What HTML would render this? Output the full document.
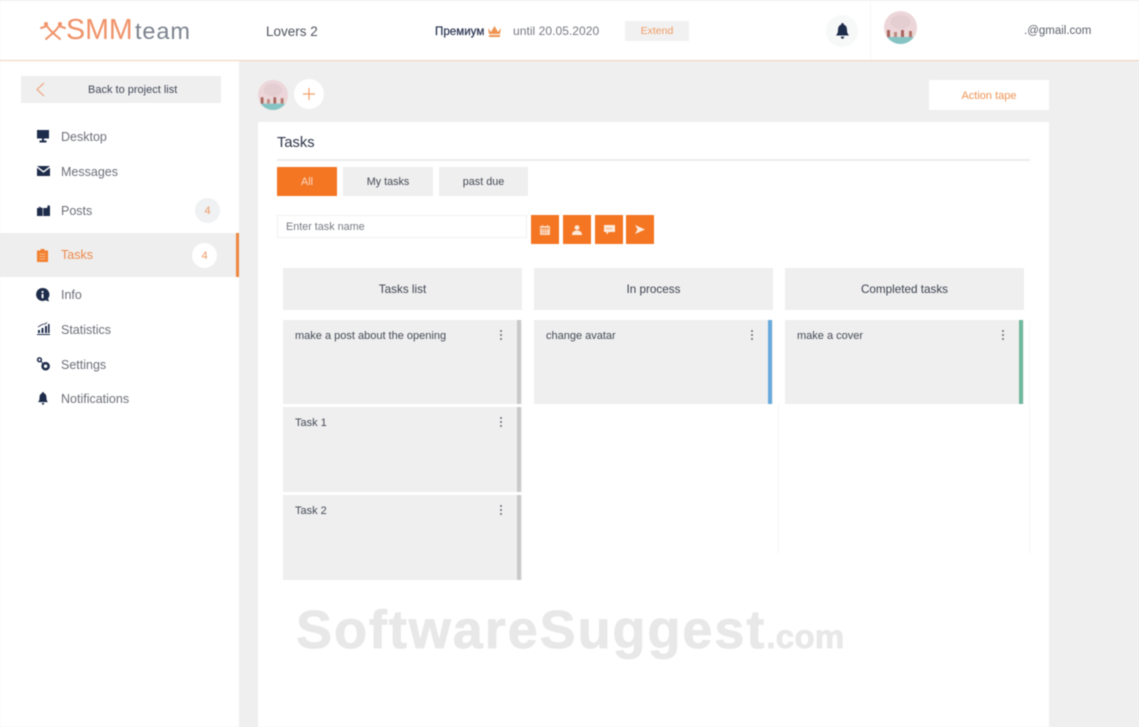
<!DOCTYPE html>
<html lang="en">
<head>
<meta charset="utf-8">
<title>SMMteam Tasks</title>
<style>
html,body{margin:0;padding:0;width:1139px;height:727px;overflow:hidden;background:#efefef;font-family:"Liberation Sans",sans-serif;color:#4a4f5c}
.a{position:absolute;box-sizing:border-box;white-space:nowrap}
.c{display:flex;align-items:center;justify-content:center}
#root{position:relative;width:1139px;height:727px;overflow:hidden;filter:blur(.4px)}
.nav{left:61px;font-size:12.5px;line-height:16px;color:#6d7079}
.ic{position:absolute;overflow:visible}
.head{top:268px;width:239px;height:42px;background:#efefef;font-size:11.7px;color:#3d4250;padding-top:1px}
.card{width:239px;background:#efefef;font-size:11px;color:#444955}
.card span{position:absolute;left:12px;top:9.5px;line-height:13px}
.bar{position:absolute;right:1px;top:0;bottom:0;width:4px}
.dots{position:absolute;width:2px;height:2px;background:#666a73;border-radius:50%;box-shadow:0 -4px 0 #666a73,0 4px 0 #666a73}
.btn{top:215px;width:28px;height:29px;background:#f47623}
.tab{top:167px;height:29px;font-size:10.8px;background:#efefef;color:#444955}
</style>
</head>
<body>
<div id="root">
<!-- sidebar -->
<div class="a" style="left:0;top:0;width:239px;height:727px;background:#fff"></div>
<!-- header -->
<div class="a" style="left:0;top:0;width:1139px;height:61px;background:#fff;border-bottom:1px solid #f0d2bb;border-top:1px solid #f2f2f2"></div>
<div class="a" style="left:870px;top:1px;width:1px;height:59px;background:#f6f6f6"></div>

<!-- logo -->
<svg class="ic" style="left:40px;top:21px" width="26" height="19" viewBox="0 0 26 19" fill="none" stroke="#f0936a" stroke-width="2" stroke-linecap="round">
<path d="M1 7 L7 5 L10 9 L13 12 M13 12 L6 18 M13 12 L20 18 M25 7 L19 5 L16 9 L13 12"/>
<circle cx="6" cy="3" r="2" fill="#f0936a" stroke="none"/><circle cx="20" cy="3" r="2" fill="#f0936a" stroke="none"/>
</svg>
<div class="a" style="left:66px;top:15px;font-size:28.6px;line-height:30px;color:#f0936a">SMM</div>
<div class="a" style="left:135px;top:18px;font-size:23.5px;line-height:27px;color:#7c838e;letter-spacing:.9px">team</div>

<div class="a" style="left:266px;top:24px;font-size:13.5px;line-height:16px;color:#50545f">Lovers 2</div>
<div class="a" style="left:435px;top:25px;font-size:11.6px;line-height:13px;color:#26304f;-webkit-text-stroke:.2px #26304f;font-family:'Liberation Sans','Noto Sans CJK SC',sans-serif">Премиум</div>
<svg class="ic" style="left:488px;top:26px" width="13" height="11" viewBox="0 0 13 11"><path d="M0 2 L3 6 L6.5 0 L10 6 L13 2 L12 8 H1 Z M1 9 H12 V11 H1 Z" fill="#ee9450"/></svg>
<div class="a" style="left:513px;top:24px;font-size:12px;line-height:14px;color:#777a82;letter-spacing:.05px">until 20.05.2020</div>
<div class="a c" style="left:625px;top:21px;width:64px;height:20px;background:#f1f1f1;color:#ee9a62;font-size:10.5px">Extend</div>

<div class="a" style="left:826px;top:15px;width:32px;height:32px;border-radius:50%;background:#f7f8f8"></div>
<svg class="ic" style="left:836px;top:23px" width="13" height="16" viewBox="0 0 13 16"><path d="M6.5 0 C7.5 0 7.8 .8 7.8 1.6 C10.2 2.4 11 4.4 11 7 C11 9.5 11.6 10.8 13 12.5 H0 C1.4 10.8 2 9.5 2 7 C2 4.4 2.8 2.4 5.2 1.6 C5.2 .8 5.5 0 6.5 0 Z M4.8 13.6 H8.2 C8.1 15 7.4 15.7 6.5 15.7 C5.6 15.7 4.9 15 4.8 13.6 Z" fill="#1e2c4b"/></svg>

<!-- header avatar -->
<svg class="ic" style="left:884px;top:11px" width="33" height="33" viewBox="0 0 33 33">
<defs><clipPath id="h"><circle cx="16.5" cy="16.5" r="16.5"/></clipPath></defs>
<g clip-path="url(#h)"><rect width="33" height="33" fill="#ecd6da"/><ellipse cx="16.5" cy="11" rx="10" ry="7" fill="#e4ced2"/><rect y="21" width="33" height="4" fill="#e9d8d2"/><rect x="3" y="19" width="3" height="7" fill="#a9645f"/><rect x="10" y="21" width="3" height="5" fill="#c08a84"/><rect x="17" y="19" width="3" height="7" fill="#a9645f"/><rect x="25" y="20" width="3" height="6" fill="#b5736c"/><rect y="26" width="33" height="7" fill="#86c4c4"/></g>
</svg>
<div class="a" style="left:1024px;top:24px;font-size:11.5px;line-height:14px;color:#5d616b">.@gmail.com</div>

<!-- back -->
<div class="a" style="left:21px;top:76px;width:200px;height:27px;background:#efefef"></div>
<svg class="ic" style="left:35px;top:82px" width="10" height="15" viewBox="0 0 10 15" fill="none" stroke="#eeaa85" stroke-width="1.2"><path d="M9 1 L2 7.5 L9 14"/></svg>
<div class="a" style="left:88px;top:83px;font-size:11px;line-height:14px;color:#434858">Back to project list</div>

<!-- active -->
<div class="a" style="left:0;top:233px;width:239px;height:44px;background:#eeeeee"></div>
<div class="a" style="left:236px;top:233px;width:3px;height:44px;background:#ee8540"></div>

<!-- nav icons -->
<svg class="ic" style="left:37px;top:130px" width="12" height="13" viewBox="0 0 12 13"><path d="M0 0 H12 V8.5 H0 Z M5 8.5 H7 V10.5 H5 Z M2.5 10.5 H9.5 V12.5 H2.5 Z" fill="#1e2c4b"/></svg>
<svg class="ic" style="left:37px;top:166px" width="13" height="10" viewBox="0 0 13 10"><path d="M0 0 H13 L6.5 5 Z M0 1.8 L6.5 6.8 L13 1.8 V10 H0 Z" fill="#1e2c4b"/></svg>
<svg class="ic" style="left:37px;top:205px" width="13" height="11" viewBox="0 0 13 11"><path d="M0 3 H2 V1.5 L5 3 L10 3 L11 0 L13 1 V11 H0 Z" fill="#1e2c4b"/><path d="M6 3 V11" stroke="#fff" stroke-width=".6"/></svg>
<svg class="ic" style="left:37px;top:249px" width="11" height="13" viewBox="0 0 11 13"><path d="M0 1.5 H3.5 V0 H7.5 V1.5 H11 V13 H0 Z" fill="#f2802f"/><path d="M2.5 5 H8.5 M2.5 7.5 H8.5 M2.5 10 H8.5" stroke="#f9c9a4" stroke-width=".8"/></svg>
<svg class="ic" style="left:36px;top:288px" width="14" height="14" viewBox="0 0 14 14"><path d="M6.5 0 A6.5 6.5 0 1 0 9.5 12.3 L13 13.5 L12 10.5 A6.5 6.5 0 0 0 6.5 0 Z" fill="#1e2c4b"/><rect x="5.6" y="6" width="1.9" height="4.2" fill="#fff"/><rect x="5.6" y="3" width="1.9" height="1.9" fill="#fff"/></svg>
<svg class="ic" style="left:37px;top:322px" width="13" height="13" viewBox="0 0 13 13"><path d="M1 8 H3 V11 H1 Z M4.5 6 H6.5 V11 H4.5 Z M8 4 H10 V11 H8 Z M11 2 H12.6 V11 H11 Z M0 12 H13 V13 H0 Z" fill="#1e2c4b"/><path d="M1 5 L5 2.5 L8 2 L10 0.5" stroke="#1e2c4b" stroke-width=".8" fill="none"/></svg>
<svg class="ic" style="left:37px;top:357px" width="13" height="14" viewBox="0 0 13 14"><circle cx="2.5" cy="2.8" r="1.9" fill="none" stroke="#1e2c4b" stroke-width="1.5"/><circle cx="8.6" cy="9.2" r="3" fill="none" stroke="#1e2c4b" stroke-width="2.6"/><path d="M4 4.5 L6 6.5" stroke="#1e2c4b" stroke-width="1"/></svg>
<svg class="ic" style="left:38px;top:392px" width="10" height="13" viewBox="0 0 13 16" preserveAspectRatio="none"><path d="M6.5 0 C7.5 0 7.8 .8 7.8 1.6 C10.2 2.4 11 4.4 11 7 C11 9.5 11.6 10.8 13 12.5 H0 C1.4 10.8 2 9.5 2 7 C2 4.4 2.8 2.4 5.2 1.6 C5.2 .8 5.5 0 6.5 0 Z M4.8 13.6 H8.2 C8.1 15 7.4 15.7 6.5 15.7 C5.6 15.7 4.9 15 4.8 13.6 Z" fill="#1e2c4b"/></svg>

<!-- nav labels -->
<div class="a nav" style="top:128.5px">Desktop</div>
<div class="a nav" style="top:163.5px">Messages</div>
<div class="a nav" style="top:203px">Posts</div>
<div class="a nav" style="top:247px;color:#ee8a4c">Tasks</div>
<div class="a nav" style="top:286.5px">Info</div>
<div class="a nav" style="top:321.5px">Statistics</div>
<div class="a nav" style="top:356.5px">Settings</div>
<div class="a nav" style="top:391px">Notifications</div>

<div class="a c" style="left:195px;top:198px;width:25px;height:25px;border-radius:50%;background:#eff1f2;color:#ee9a62;font-size:11px">4</div>
<div class="a c" style="left:192px;top:243px;width:25px;height:25px;border-radius:50%;background:#fff;color:#ee9a62;font-size:11px">4</div>

<!-- top row content -->
<svg class="ic" style="left:258px;top:80px" width="30" height="30" viewBox="0 0 33 33">
<defs><clipPath id="h2"><circle cx="16.5" cy="16.5" r="16.5"/></clipPath></defs>
<g clip-path="url(#h2)"><rect width="33" height="33" fill="#ecd6da"/><ellipse cx="16.5" cy="11" rx="10" ry="7" fill="#e4ced2"/><rect y="21" width="33" height="4" fill="#e9d8d2"/><rect x="3" y="19" width="3" height="7" fill="#a9645f"/><rect x="10" y="21" width="3" height="5" fill="#c08a84"/><rect x="17" y="19" width="3" height="7" fill="#a9645f"/><rect x="25" y="20" width="3" height="6" fill="#b5736c"/><rect y="26" width="33" height="7" fill="#86c4c4"/></g>
</svg>
<div class="a" style="left:294px;top:79px;width:30px;height:30px;border-radius:50%;background:#fff"></div>
<svg class="ic" style="left:302px;top:87px" width="14" height="14" viewBox="0 0 14 14"><path d="M7 1 V13 M1 7 H13" stroke="#f1a06a" stroke-width="1.2"/></svg>
<div class="a c" style="left:929px;top:80px;width:120px;height:30px;background:#fff;color:#ee9455;font-size:11px;padding-top:1px">Action tape</div>

<!-- panel -->
<div class="a" style="left:258px;top:122px;width:791px;height:605px;background:#fff"></div>
<div class="a" style="left:277px;top:134px;font-size:14.7px;line-height:18px;color:#2c3447">Tasks</div>
<div class="a" style="left:277px;top:159px;width:753px;height:2px;background:#ececec"></div>

<div class="a c tab" style="left:277px;width:60px;background:#f47623;color:#fbd9c2">All</div>
<div class="a c tab" style="left:343px;width:90px">My tasks</div>
<div class="a c tab" style="left:439px;width:89px">past due</div>

<div class="a" style="left:277px;top:215px;width:250px;height:23px;border:1px solid #f1f1f1;font-size:10.8px;line-height:22px;padding-left:8px;color:#777a82">Enter task name</div>

<div class="a c btn" style="left:531px"><svg width="10" height="10" viewBox="0 0 10 10"><path d="M0 1 H2 V0 H3 V1 H7 V0 H8 V1 H10 V10 H0 Z" fill="#fad5bb"/><path d="M1 3.5 H9" stroke="#f47623"/><path d="M2 5.5 H8 M2 7.7 H8" stroke="#f47623" stroke-dasharray="1 1"/></svg></div>
<div class="a c btn" style="left:563px"><svg width="10" height="10" viewBox="0 0 10 10"><circle cx="5" cy="2.6" r="2.4" fill="#fdeadb"/><path d="M0 10 C0 6.5 2.5 5.5 5 5.5 C7.5 5.5 10 6.5 10 10 Z" fill="#fdeadb"/></svg></div>
<div class="a c btn" style="left:595px"><svg width="11" height="10" viewBox="0 0 11 10"><path d="M0 0 H11 V7 H5 L2.5 9.5 V7 H0 Z" fill="#fdeadb"/><path d="M2.5 3.5 H8.5" stroke="#f47623" stroke-dasharray="1 1"/></svg></div>
<div class="a c btn" style="left:626px"><svg width="10" height="9" viewBox="0 0 10 9"><path d="M0 0 L10 4.5 L0 9 L2.5 4.5 Z" fill="#fdeadb"/></svg></div>

<!-- column guides -->
<div class="a" style="left:778px;top:404px;width:1px;height:150px;background:#f6f6f6"></div>
<div class="a" style="left:1029px;top:320px;width:1px;height:234px;background:#f6f6f6"></div>

<!-- columns -->
<div class="a c head" style="left:283px">Tasks list</div>
<div class="a c head" style="left:534px">In process</div>
<div class="a c head" style="left:785px">Completed tasks</div>

<div class="a card" style="left:283px;top:320px;height:84px"><span>make a post about the opening</span><i class="dots" style="left:217px;top:14px"></i><i class="bar" style="background:#c9c9c9"></i></div>
<div class="a card" style="left:283px;top:407px;height:85px"><span>Task 1</span><i class="dots" style="left:217px;top:14px"></i><i class="bar" style="background:#c9c9c9"></i></div>
<div class="a card" style="left:283px;top:495px;height:85px"><span>Task 2</span><i class="dots" style="left:217px;top:14px"></i><i class="bar" style="background:#c9c9c9"></i></div>
<div class="a card" style="left:534px;top:320px;height:84px"><span>change avatar</span><i class="dots" style="left:217px;top:14px"></i><i class="bar" style="background:#68a9dc"></i></div>
<div class="a card" style="left:785px;top:320px;height:84px"><span>make a cover</span><i class="dots" style="left:217px;top:14px"></i><i class="bar" style="background:#6fb79d"></i></div>

<!-- watermark -->
<div class="a" style="left:296px;top:598px;font-size:54px;line-height:64px;font-weight:bold;color:#e8e8e8;letter-spacing:1.95px;-webkit-text-stroke:.8px #e8e8e8">SoftwareSuggest<span style="font-size:33px;letter-spacing:.3px">.com</span></div>
</div>
</body>
</html>
